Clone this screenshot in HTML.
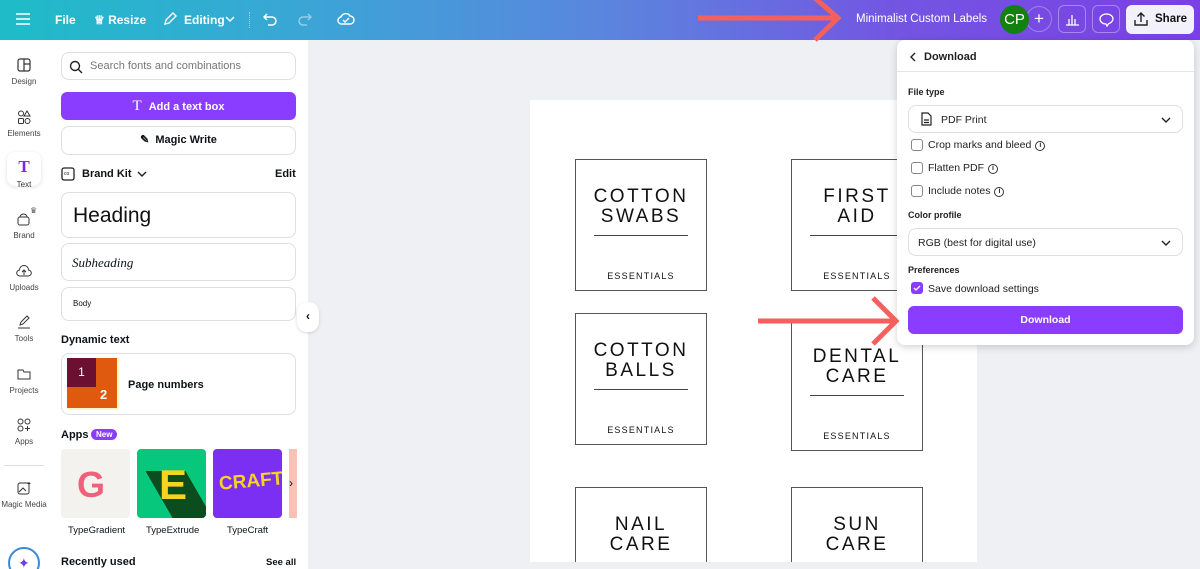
<!DOCTYPE html>
<html style="width:1200px;height:569px;overflow:hidden"><head><meta charset="utf-8"><style>
*{box-sizing:border-box;margin:0;padding:0}
body{width:1200px;height:569px;overflow:hidden;font-family:"Liberation Sans",sans-serif;background:#eef0f3;position:relative;color:#0d1216}
.hdr{position:absolute;left:0;top:0;width:1200px;height:40px;background:linear-gradient(90deg,#1ebcc8 0%,#3aa6d6 25%,#5a86de 50%,#7355e2 75%,#7b3fe6 100%);color:#fff;font-size:12px;font-weight:bold}
.hdr span{position:absolute;top:13px}
.abs{position:absolute}
.rail{position:absolute;left:0;top:40px;width:48px;height:529px;background:#fff;overflow:hidden}
.ri{position:absolute;left:0;width:48px;text-align:center;font-size:8px;color:#444}
.ri svg{display:block;margin:0 auto 5px}
.panel{position:absolute;left:48px;top:40px;width:260px;height:529px;background:#fff;overflow:hidden}
.box{position:absolute;border:1px solid #dcdfe3;border-radius:8px;background:#fff}
.lbl{position:absolute;width:132px;height:132px;border:1.5px solid #555;background:#fff;text-align:center;font-size:19px;letter-spacing:2.5px;line-height:20px;color:#111}
.lbl .t{position:absolute;top:27px;left:0;width:100%}
.lbl .ln{position:absolute;left:18px;right:18px;top:75px;border-top:1.5px solid #444}
.lbl .e{position:absolute;bottom:8px;width:100%;font-size:9px;letter-spacing:1.2px;line-height:12px}
.dl{position:absolute;left:897px;top:40px;width:297px;height:305px;background:#fff;border-radius:8px;box-shadow:0 2px 8px rgba(0,0,0,.18);font-size:10.5px;color:#222}
.cb{position:absolute;left:14px;width:12px;height:12px;border:1px solid #888;border-radius:3px}
.info{display:inline-block;width:10px;height:10px;border:1px solid #333;border-radius:50%;font-size:7px;text-align:center;line-height:8px;margin-left:4px;vertical-align:1px;font-weight:bold}
.pg{position:absolute;left:530px;top:100px;width:447px;height:469px;background:#fff;overflow:hidden}
</style></head><body>
<div class="hdr">
<svg class="abs" style="left:16px;top:13px" width="14" height="12"><path d="M0 1h14M0 6h14M0 11h14" stroke="#fff" stroke-width="1.6"/></svg>
<span style="left:55px">File</span>
<span style="left:94px">♕ Resize</span>
<svg class="abs" style="left:163px;top:12px" width="14" height="14"><path d="M2 12l1-4 7-7 3 3-7 7z" stroke="#fff" fill="none" stroke-width="1.4"/></svg>
<span style="left:184px">Editing</span>
<svg class="abs" style="left:225px;top:16px" width="10" height="7"><path d="M1 1l4 4 4-4" stroke="#fff" fill="none" stroke-width="1.5"/></svg>
<div class="abs" style="left:249px;top:12px;height:16px;border-left:1px dotted rgba(255,255,255,.5)"></div>
<svg class="abs" style="left:263px;top:12px" width="15" height="14"><path d="M4 2L1 5l3 3M1 5h8a4 4 0 010 8H5" stroke="#fff" fill="none" stroke-width="1.5"/></svg>
<svg class="abs" style="left:297px;top:12px" width="15" height="14" opacity=".45"><path d="M11 2l3 3-3 3M14 5H6a4 4 0 000 8h4" stroke="#fff" fill="none" stroke-width="1.5"/></svg>
<svg class="abs" style="left:337px;top:11px" width="18" height="15"><path d="M5 13h8a4 4 0 000-8 5 5 0 00-9 1 3.5 3.5 0 001 7z M6 9l2 2 4-4" stroke="#fff" fill="none" stroke-width="1.4"/></svg>
<span style="left:856px;font-weight:normal;font-size:11.5px;top:13px">Minimalist Custom Labels</span>
<div class="abs" style="left:1026px;top:6px;width:26px;height:26px;border-radius:50%;border:1px solid rgba(255,255,255,.3);text-align:center;line-height:23px;font-size:17px;font-weight:normal">+</div>
<div class="abs" style="left:1000px;top:5px;width:29px;height:29px;border-radius:50%;background:#13800f;color:#fff;font-size:15px;font-weight:normal;text-align:center;line-height:29px">CP</div>
<div class="abs" style="left:1058px;top:5px;width:28px;height:28px;border-radius:6px;border:1px solid rgba(255,255,255,.35)"><svg style="margin:8px 0 0 7px" width="13" height="12"><path d="M0 11h13M3 11V5M6 11V1M9 11V5" stroke="#fff" stroke-width="1.3"/></svg></div>
<div class="abs" style="left:1092px;top:5px;width:28px;height:28px;border-radius:6px;border:1px solid rgba(255,255,255,.35)"><svg style="margin:7px 0 0 6px" width="15" height="14"><path d="M7.5 1C3.5 1 1 3.3 1 6s2.5 5 6 5l1 2 1.5-2.2C12 10 14 8 14 6c0-2.7-2.5-5-6.5-5z" stroke="#fff" fill="none" stroke-width="1.3"/></svg></div>
<div class="abs" style="left:1126px;top:5px;width:68px;height:29px;border-radius:6px;background:#f2f0fa;color:#111"><svg class="abs" style="left:8px;top:7px" width="14" height="14"><path d="M7 10V1M3.5 4.5L7 1l3.5 3.5M1 8v5h12V8" stroke="#222" fill="none" stroke-width="1.4"/></svg><span style="left:29px;top:8px;font-size:11.5px">Share</span></div>
</div>
<div class="rail">
<div class="ri" style="top:18px"><svg width="14" height="14"><rect x="1" y="1" width="12" height="12" rx="2" stroke="#333" fill="none" stroke-width="1.2"/><path d="M7 1v12M7 6h6" stroke="#333" stroke-width="1.2"/></svg>Design</div>
<div class="ri" style="top:70px"><svg width="14" height="14"><circle cx="4" cy="3.5" r="2.5" stroke="#333" fill="none"/><path d="M10 1l3 5H7z" stroke="#333" fill="none"/><rect x="1.5" y="8.5" width="5" height="5" rx="1" stroke="#333" fill="none"/><circle cx="10.5" cy="11" r="2.5" stroke="#333" fill="none"/></svg>Elements</div>
<div class="abs" style="left:7px;top:112px;width:34px;height:34px;border-radius:8px;background:#fff;box-shadow:0 1px 4px rgba(0,0,0,.12)"></div>
<div class="ri" style="top:118px;color:#333"><div style="font-size:17px;color:#7d2ae8;font-weight:bold;line-height:17px;margin-bottom:5px;font-family:'Liberation Serif',serif">T</div>Text</div>
<div class="ri" style="top:172px"><svg width="16" height="14"><rect x="2" y="5" width="11" height="8" rx="2" stroke="#333" fill="none"/><path d="M4 5a3.5 3 0 017 0" stroke="#333" fill="none"/></svg>Brand</div>
<div class="abs" style="left:30px;top:166px;font-size:8px;color:#555">♛</div>
<div class="ri" style="top:224px"><svg width="16" height="14"><path d="M4 12a3 3 0 01-.5-6 4.5 4.5 0 019 0A3 3 0 0112 12z M8 11V6M6 8l2-2 2 2" stroke="#333" fill="none"/></svg>Uploads</div>
<div class="ri" style="top:275px"><svg width="14" height="14"><path d="M3 10l1-3 6-6 2 2-6 6zM1 13h12" stroke="#333" fill="none"/></svg>Tools</div>
<div class="ri" style="top:327px"><svg width="14" height="14"><path d="M1 3h5l1 2h6v7H1z" stroke="#333" fill="none"/></svg>Projects</div>
<div class="ri" style="top:378px"><svg width="14" height="14"><circle cx="3.5" cy="3.5" r="2.5" stroke="#333" fill="none"/><circle cx="10.5" cy="3.5" r="2.5" stroke="#333" fill="none"/><circle cx="3.5" cy="10.5" r="2.5" stroke="#333" fill="none"/><path d="M10.5 8v5M8 10.5h5" stroke="#333"/></svg>Apps</div>
<div class="abs" style="left:4px;top:425px;width:40px;border-top:1px solid #ddd"></div>
<div class="ri" style="top:441px"><svg width="14" height="14"><rect x="1" y="2" width="11" height="11" rx="2" stroke="#333" fill="none"/><path d="M2 11l4-4 3 3M12 1v3M10.5 2.5h3" stroke="#333" fill="none"/></svg>Magic Media</div>
<svg class="abs" style="left:6px;top:505px" width="36" height="24"><circle cx="18" cy="18" r="15" stroke="#3b8bdb" stroke-width="2" fill="#fff"/><text x="12" y="23" font-size="14" fill="#6b3ee8">✦</text></svg>
</div>
<div class="panel">
<div class="box" style="left:13px;top:12px;width:235px;height:28px"><svg class="abs" style="left:7px;top:7px" width="14" height="14"><circle cx="6" cy="6" r="4.5" stroke="#222" fill="none" stroke-width="1.4"/><path d="M9.5 9.5l3.5 3.5" stroke="#222" stroke-width="1.4"/></svg><span class="abs" style="left:28px;top:7px;font-size:11px;color:#777">Search fonts and combinations</span></div>
<div class="abs" style="left:13px;top:52px;width:235px;height:28px;border-radius:6px;background:#8b3dff;color:#fff;font-size:11px;font-weight:bold;text-align:center;line-height:28px"><span style="font-family:'Liberation Serif',serif;font-weight:normal;font-size:15px;margin-right:7px">T</span>Add a text box</div>
<div class="box" style="left:13px;top:86px;width:235px;height:29px;text-align:center;line-height:27px;font-size:11px;font-weight:bold">✎&nbsp; Magic Write</div>
<svg class="abs" style="left:13px;top:127px" width="14" height="14"><rect x="1" y="1" width="12" height="12" rx="2" stroke="#222" fill="none" stroke-width="1.3"/><text x="3" y="8" font-size="5" fill="#222">co</text></svg>
<span class="abs" style="left:34px;top:128px;font-size:11px;font-weight:bold">Brand Kit</span>
<svg class="abs" style="left:89px;top:131px" width="10" height="7"><path d="M1 1l4 4 4-4" stroke="#222" fill="none" stroke-width="1.4"/></svg>
<span class="abs" style="left:227px;top:128px;font-size:11px;font-weight:bold">Edit</span>
<div class="box" style="left:13px;top:152px;width:235px;height:46px"><span class="abs" style="left:11px;top:11px;font-size:21px;color:#111">Heading</span></div>
<div class="box" style="left:13px;top:203px;width:235px;height:38px"><span class="abs" style="left:10px;top:11px;font-size:13px;font-style:italic;font-family:'Liberation Serif',serif">Subheading</span></div>
<div class="box" style="left:13px;top:247px;width:235px;height:34px"><span class="abs" style="left:11px;top:11px;font-size:8px">Body</span></div>
<span class="abs" style="left:13px;top:294px;font-size:11px;font-weight:bold">Dynamic text</span>
<div class="box" style="left:13px;top:313px;width:235px;height:62px">
<div class="abs" style="left:5px;top:4px;width:52px;height:52px;background:#fff7cc"></div>
<div class="abs" style="left:5px;top:4px;width:50px;height:50px;background:#df5a0e"></div>
<div class="abs" style="left:5px;top:4px;width:29px;height:29px;background:#6b1030;color:#fff;font-size:12px;text-align:center;line-height:29px">1</div>
<span class="abs" style="left:38px;top:33px;color:#fff;font-size:13px;font-weight:bold">2</span>
<span class="abs" style="left:66px;top:25px;font-size:11px;font-weight:bold">Page numbers</span></div>
<span class="abs" style="left:13px;top:389px;font-size:11px;font-weight:bold">Apps</span>
<span class="abs" style="left:43px;top:389px;font-size:8px;font-weight:bold;background:#8b3dff;color:#fff;border-radius:8px;padding:1px 5px">New</span>
<div class="abs" style="left:13px;top:409px;width:69px;height:69px;background:#f3f2ef;border-radius:4px"><div class="abs" style="left:16px;top:18px;font-size:36px;font-weight:bold;color:#f0607a;line-height:36px">G</div></div>
<div class="abs" style="left:89px;top:409px;width:69px;height:69px;background:#07c77c;border-radius:4px;overflow:hidden"><div class="abs" style="left:22px;top:22px;width:40px;height:47px;background:#0b4d1e;transform:skewX(30deg)"></div><div class="abs" style="left:22px;top:15px;font-size:42px;font-weight:bold;color:#f5d322;line-height:42px">E</div></div>
<div class="abs" style="left:165px;top:409px;width:69px;height:69px;background:#7b2ff2;border-radius:4px;overflow:hidden"><div class="abs" style="left:6px;top:22px;font-size:19px;font-weight:bold;color:#f5d322;transform:rotate(-5deg)">CRAFT</div></div>
<div class="abs" style="left:241px;top:409px;width:8px;height:69px;background:#f7c1b4"></div>
<span class="abs" style="left:241px;top:436px;font-size:12px">›</span>
<span class="abs" style="left:20px;top:485px;font-size:9.5px">TypeGradient</span>
<span class="abs" style="left:98px;top:485px;font-size:9.5px">TypeExtrude</span>
<span class="abs" style="left:179px;top:485px;font-size:9.5px">TypeCraft</span>
<span class="abs" style="left:13px;top:516px;font-size:11px;font-weight:bold">Recently used</span>
<span class="abs" style="left:218px;top:517px;font-size:9.5px;font-weight:bold">See all</span>
</div>
<div class="abs" style="left:297px;top:302px;width:22px;height:30px;background:#fff;border-radius:10px;box-shadow:0 1px 3px rgba(0,0,0,.15);text-align:center;line-height:28px;font-size:12px;font-weight:bold">‹</div>
<div class="pg">
<div class="lbl" style="left:45px;top:59px"><div class="t">COTTON<br>SWABS</div><div class="ln"></div><div class="e">ESSENTIALS</div></div>
<div class="lbl" style="left:261px;top:59px"><div class="t">FIRST<br>AID</div><div class="ln"></div><div class="e">ESSENTIALS</div></div>
<div class="lbl" style="left:45px;top:213px"><div class="t">COTTON<br>BALLS</div><div class="ln"></div><div class="e">ESSENTIALS</div></div>
<div class="lbl" style="left:261px;top:219px"><div class="t">DENTAL<br>CARE</div><div class="ln"></div><div class="e">ESSENTIALS</div></div>
<div class="lbl" style="left:45px;top:387px;height:82px;border-bottom:none"><div class="t">NAIL<br>CARE</div></div>
<div class="lbl" style="left:261px;top:387px;height:82px;border-bottom:none"><div class="t">SUN<br>CARE</div></div>
</div>
<div class="abs" style="left:308px;top:562px;width:892px;height:7px;background:#eef0f3"></div>
<div class="dl">
<svg class="abs" style="left:13px;top:12px" width="7" height="10"><path d="M5 1L1 5l4 4" stroke="#222" fill="none" stroke-width="1.4"/></svg>
<span class="abs" style="left:27px;top:11px;font-size:11px;font-weight:bold">Download</span>
<div class="abs" style="left:0;top:31px;width:297px;border-top:1px solid #e5e5e5"></div>
<span class="abs" style="left:11px;top:47px;font-size:9px;font-weight:bold">File type</span>
<div class="box" style="left:11px;top:65px;width:275px;height:28px"><svg class="abs" style="left:12px;top:6px" width="11" height="14"><path d="M1 1h6l3 3v9H1zM3 8h5M3 10.5h5" stroke="#222" fill="none" stroke-width="1.2"/></svg><span class="abs" style="left:32px;top:8px">PDF Print</span><svg class="abs" style="left:252px;top:11px" width="10" height="7"><path d="M1 1l4 4 4-4" stroke="#222" fill="none" stroke-width="1.4"/></svg></div>
<div class="cb" style="top:99px"></div><span class="abs" style="left:31px;top:99px">Crop marks and bleed<span class="info">i</span></span>
<div class="cb" style="top:122px"></div><span class="abs" style="left:31px;top:122px">Flatten PDF<span class="info">i</span></span>
<div class="cb" style="top:145px"></div><span class="abs" style="left:31px;top:145px">Include notes<span class="info">i</span></span>
<span class="abs" style="left:11px;top:170px;font-size:9px;font-weight:bold">Color profile</span>
<div class="box" style="left:11px;top:188px;width:275px;height:28px"><span class="abs" style="left:9px;top:8px">RGB (best for digital use)</span><svg class="abs" style="left:252px;top:11px" width="10" height="7"><path d="M1 1l4 4 4-4" stroke="#222" fill="none" stroke-width="1.4"/></svg></div>
<span class="abs" style="left:11px;top:225px;font-size:9px;font-weight:bold">Preferences</span>
<div class="abs" style="left:14px;top:242px;width:12px;height:12px;border-radius:3px;background:#8b3dff"><svg width="12" height="12"><path d="M3 6l2 2 4-4" stroke="#fff" fill="none" stroke-width="1.3"/></svg></div>
<span class="abs" style="left:31px;top:243px">Save download settings</span>
<div class="abs" style="left:11px;top:266px;width:275px;height:28px;border-radius:6px;background:#8b3dff;color:#fff;text-align:center;line-height:28px;font-size:10.5px;font-weight:bold">Download</div>
</div>
<svg class="abs" style="left:0;top:0" width="1200" height="569">
<path d="M698 18H836M815 -2L838 18L815 40" stroke="#f4605e" stroke-width="5" fill="none"/>
<path d="M758 321H895M873 298L896 321L873 344" stroke="#f4605e" stroke-width="5" fill="none"/>
</svg>
</body></html>
